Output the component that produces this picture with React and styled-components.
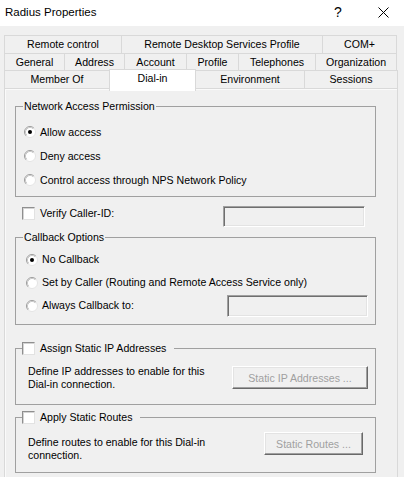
import React from 'react';
import styled, { createGlobalStyle } from 'styled-components';

const Global = createGlobalStyle`
  html, body { margin: 0; padding: 0; overflow: hidden; background: #f0f0f0; }
  body { font-family: "Liberation Sans", Arial, sans-serif; font-size: 10.6px; color: #000; }
  * { box-sizing: border-box; }
`;

const Window = styled.div`
  width: 404px;
  height: 477px;
  overflow: hidden;
  background: #f0f0f0;
`;

const TitleBar = styled.div`
  height: 26px;
  background: #fff;
  display: flex;
  align-items: center;
  padding-left: 5px;
`;

const Title = styled.div`
  flex: 1;
  font-size: 11.5px;
  line-height: 14px;
  margin-top: -2px;
`;

const Caption = styled.div`
  display: flex;
  align-items: center;
  gap: 21px;
  padding-right: 9px;
  margin-top: -2px;
`;

const CaptionBtn = styled.div`
  width: 24px;
  height: 18px;
  display: flex;
  align-items: center;
  justify-content: center;
  font-size: 14px;
  line-height: 14px;
`;

const Body = styled.div`
  padding: 9px 0 0 4px;
`;

const TabRow = styled.div`
  display: flex;
  height: ${p => p.h}px;
  margin-top: ${p => (p.first ? 0 : -1)}px;
`;

const Tab = styled.div`
  width: ${p => p.w}px;
  height: 100%;
  margin-left: ${p => (p.first ? 0 : -1)}px;
  border: 1px solid #d9d9d9;
  background: #f0f0f0;
  display: flex;
  align-items: center;
  justify-content: center;
  line-height: 13px;
  white-space: nowrap;
`;

const ActiveTab = styled.div`
  position: relative;
  z-index: 2;
  width: ${p => p.w}px;
  height: 22px;
  margin-left: -1px;
  margin-top: -1px;
  align-self: flex-start;
  border: 1px solid #d9d9d9;
  border-bottom: none;
  background: #fff;
  display: flex;
  justify-content: center;
  padding-top: 2px;
  line-height: 13px;
`;

const Panel = styled.div`
  width: 394px;
  height: 400px;
  margin-top: -1px;
  border: 1px solid #d9d9d9;
  box-shadow: inset 1px 1px 0 #fafafa;
  padding: 11px 0 0 10px;
`;

const Group = styled.fieldset`
  width: 361px;
  margin: ${p => p.mt || 0}px 0 0 0;
  padding: ${p => p.pad};
  border: 1px solid #a0a0a0;
  min-width: 0;
`;

const Legend = styled.legend`
  padding: 0 1px;
  margin-left: 7px;
  line-height: 13px;
`;

const CheckLegend = styled.legend`
  display: flex;
  align-items: center;
  gap: 5px;
  padding: 0 8px 0 0;
  margin-left: 6px;
  line-height: 13px;
  height: 13px;
`;

const Option = styled.div`
  display: flex;
  align-items: center;
  height: ${p => p.h}px;
  padding-left: ${p => p.indent}px;
  padding-right: ${p => p.right || 0}px;
  gap: 4px;
  line-height: 13px;
  white-space: nowrap;
`;

const Box = styled.span`
  display: inline-block;
  flex: none;
  width: 13px;
  height: 13px;
  background: #fff;
  border-top: 1px solid #8f8f8f;
  border-left: 1px solid #8f8f8f;
  border-right: 1px solid #e2e2e2;
  border-bottom: 1px solid #e2e2e2;
  box-shadow: inset 1px 1px 0 #d4d4d4;
`;

const VerifyRow = styled.div`
  width: 361px;
  height: 21px;
  margin-top: 9px;
  display: flex;
  align-items: flex-start;
  padding-left: 7px;
  padding-right: 11px;
`;

const CheckLabel = styled.span`
  display: flex;
  align-items: center;
  gap: 5px;
  margin-top: 1px;
  line-height: 13px;
`;

const TextBox = styled.div`
  margin-left: auto;
  width: ${p => p.w}px;
  height: ${p => p.h}px;
  background: #f0f0f0;
  border-top: 1px solid #a0a0a0;
  border-left: 1px solid #a0a0a0;
  border-right: 1px solid #fff;
  border-bottom: 1px solid #fff;
  box-shadow: inset 1px 1px 0 #6f6f6f, inset -1px -1px 0 #e3e3e3;
`;

const ContentRow = styled.div`
  display: flex;
  justify-content: space-between;
  align-items: flex-start;
  padding-left: 12px;
  padding-right: ${p => p.right}px;
`;

const Description = styled.div`
  width: 185px;
  line-height: 13px;
`;

const Button = styled.div`
  width: ${p => p.w}px;
  height: 23px;
  margin-top: ${p => p.mt}px;
  background: #f0f0f0;
  color: #a0a0a0;
  border-top: 1px solid #fff;
  border-left: 1px solid #fff;
  border-right: 1px solid #696969;
  border-bottom: 1px solid #696969;
  box-shadow: inset -1px -1px 0 #a0a0a0, inset 1px 1px 0 #e3e3e3;
  display: flex;
  align-items: center;
  justify-content: center;
  white-space: nowrap;
`;

const Radio = ({ checked }) => (
  <svg width="12" height="12" viewBox="0 0 12 12" style={{ flex: 'none' }}>
    <circle cx="6" cy="6" r="5.5" fill="#fff" />
    <path d="M2.11 9.89 A5.5 5.5 0 0 1 9.89 2.11" fill="none" stroke="#9a9a9a" />
    <path d="M9.89 2.11 A5.5 5.5 0 0 1 2.11 9.89" fill="none" stroke="#e4e4e4" />
    <path d="M2.82 9.18 A4.5 4.5 0 0 1 9.18 2.82" fill="none" stroke="#c8c8c8" />
    {checked && <circle cx="6" cy="6" r="2" fill="#000" />}
  </svg>
);

const CloseIcon = () => (
  <svg width="11" height="11" viewBox="0 0 11 11">
    <path d="M0.5 0.5 L10.5 10.5 M10.5 0.5 L0.5 10.5" stroke="#000" strokeWidth="1" fill="none" />
  </svg>
);

const row1 = [['Remote control', 118], ['Remote Desktop Services Profile', 202], ['COM+', 75]];
const row2 = [['General', 61], ['Address', 61], ['Account', 63], ['Profile', 53], ['Telephones', 78], ['Organization', 82]];

export default function App() {
  return (
    <Window>
      <Global />
      <TitleBar>
        <Title>Radius Properties</Title>
        <Caption>
          <CaptionBtn>?</CaptionBtn>
          <CaptionBtn><CloseIcon /></CaptionBtn>
        </Caption>
      </TitleBar>
      <Body>
        <TabRow h={19} first>
          {row1.map(([t, w], i) => <Tab key={t} w={w} first={i === 0}>{t}</Tab>)}
        </TabRow>
        <TabRow h={18}>
          {row2.map(([t, w], i) => <Tab key={t} w={w} first={i === 0}>{t}</Tab>)}
        </TabRow>
        <TabRow h={19}>
          <Tab w={106} first>Member Of</Tab>
          <ActiveTab w={87}>Dial-in</ActiveTab>
          <Tab w={110}>Environment</Tab>
          <Tab w={94}>Sessions</Tab>
        </TabRow>
        <Panel>
          <Group pad="7px 0 4px 0">
            <Legend>Network Access Permission</Legend>
            <Option h={24} indent={8}><Radio checked />Allow access</Option>
            <Option h={24} indent={8}><Radio />Deny access</Option>
            <Option h={24} indent={8}><Radio />Control access through NPS Network Policy</Option>
          </Group>
          <VerifyRow>
            <CheckLabel><Box />Verify Caller-ID:</CheckLabel>
            <TextBox w={142} h={21} />
          </VerifyRow>
          <Group mt={4} pad="4px 0 7px 0">
            <Legend>Callback Options</Legend>
            <Option h={23} indent={10}><Radio checked />No Callback</Option>
            <Option h={23} indent={10}><Radio />Set by Caller (Routing and Remote Access Service only)</Option>
            <Option h={23} indent={10} right={7}>
              <Radio />Always Callback to:
              <TextBox w={141} h={22} />
            </Option>
          </Group>
          <Group mt={17} pad="10px 0 13px 0">
            <CheckLegend><Box />Assign Static IP Addresses</CheckLegend>
            <ContentRow right={7}>
              <Description>Define IP addresses to enable for this Dial-in connection.</Description>
              <Button w={136} mt={1}>Static IP Addresses ...</Button>
            </ContentRow>
          </Group>
          <Group mt={6} pad="12px 0 10px 0">
            <CheckLegend><Box />Apply Static Routes</CheckLegend>
            <ContentRow right={12}>
              <Description>Define routes to enable for this Dial-in connection.</Description>
              <Button w={99} mt={-4}>Static Routes ...</Button>
            </ContentRow>
          </Group>
        </Panel>
      </Body>
    </Window>
  );
}
